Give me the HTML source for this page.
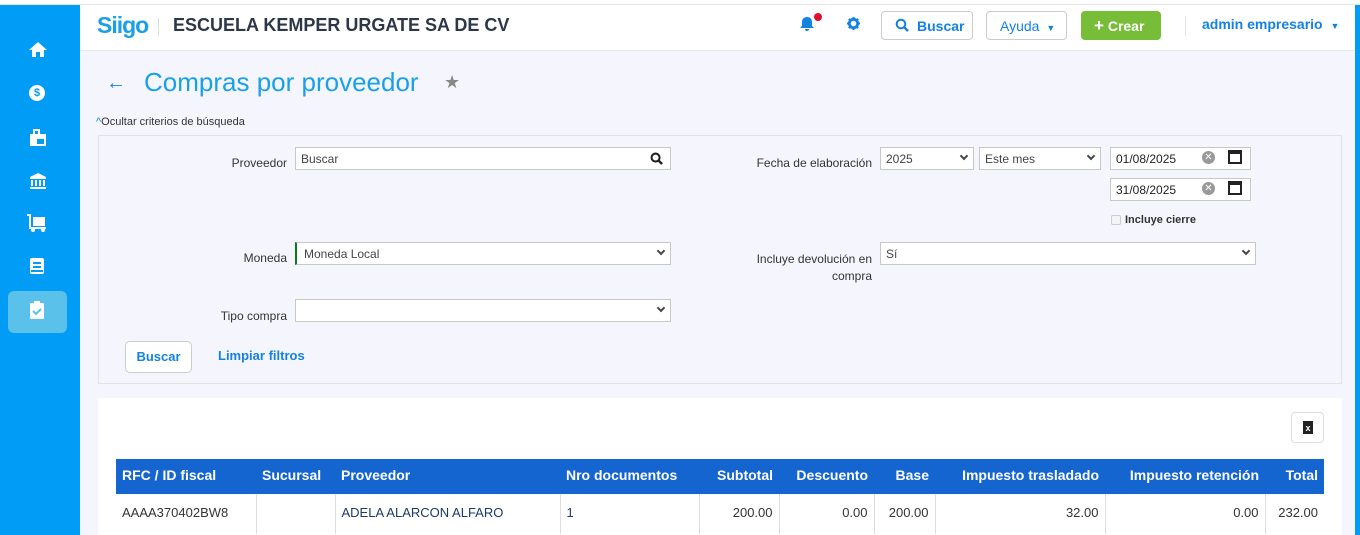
<!DOCTYPE html>
<html><head><meta charset="utf-8"><style>
*{box-sizing:border-box;margin:0;padding:0}
body{width:1360px;height:535px;overflow:hidden;background:#f5f6fd;font-family:"Liberation Sans",sans-serif;position:relative}
.a{position:absolute}
.side{left:0;top:5px;width:80px;height:530px;background:#009cf6}
.hdr{left:80px;top:5px;width:1275px;height:46px;background:#fff;border-bottom:1px solid #e6e8ee}
.lbl{font-size:12px;color:#333;text-align:right}
.inp{background:#fff;border:1px solid #c8c8c8;height:23px;font-size:12px;color:#444;padding:4px 0 0 5px}
.chev{position:absolute;right:6px;top:5px;width:6px;height:6px;border-right:2px solid #444;border-bottom:2px solid #444;transform:rotate(45deg)}
th{background:#1565d0;color:#fff;font-size:14px;font-weight:bold;height:35px;padding:0 6px 3px}
td{font-size:13px;color:#333;height:40px;padding:0 6px 4px;border-right:1px solid #ddd;vertical-align:middle}
table{border-collapse:collapse;position:absolute;left:116px;top:459px;width:1208px}
</style></head><body>
<div class="a" style="left:0;top:0;width:1360px;height:5px;background:#fff;border-bottom:1px solid #e4e4e4"></div>
<div class="a side"></div>
<div class="a" style="left:1355px;top:5px;width:5px;height:530px;background:#009cf6"></div>
<svg class="a" style="left:28px;top:40px" width="20" height="20" viewBox="0 0 20 20"><path d="M10 2L1 10h3v7h4v-5h4v5h4v-7h3z" fill="#fff"/></svg>
<div class="a" style="left:29px;top:85px;width:16px;height:16px;border-radius:50%;background:#fff;color:#009cf6;font-size:11px;font-weight:bold;text-align:center;line-height:16px">$</div>
<svg class="a" style="left:28px;top:128px" width="20" height="20" viewBox="0 0 20 20"><rect x="2" y="6" width="16" height="12" fill="#fff"/><rect x="6" y="2" width="5" height="5" fill="none" stroke="#fff" stroke-width="2"/><rect x="9" y="11" width="7" height="5" fill="#009cf6"/></svg>
<svg class="a" style="left:28px;top:171px" width="20" height="20" viewBox="0 0 20 20"><path d="M10 2L2 6v2h16V6z M3 9h2v6H3z M7 9h2v6H7z M11 9h2v6h-2z M15 9h2v6h-2z M2 16h16v2H2z" fill="#fff"/></svg>
<svg class="a" style="left:26px;top:213px" width="22" height="20" viewBox="0 0 22 20"><path d="M1 2h3v13h16" fill="none" stroke="#fff" stroke-width="2"/><rect x="7" y="4" width="12" height="9" fill="#fff"/><circle cx="7" cy="17" r="2" fill="#fff"/><circle cx="17" cy="17" r="2" fill="#fff"/></svg>
<svg class="a" style="left:29px;top:257px" width="16" height="18" viewBox="0 0 16 18"><rect x="1" y="1" width="14" height="16" rx="2" fill="#fff"/><rect x="4" y="5" width="8" height="2" fill="#009cf6"/><rect x="4" y="9" width="8" height="2" fill="#009cf6"/><rect x="2" y="13" width="12" height="2" fill="#009cf6"/></svg>
<div class="a" style="left:8px;top:291px;width:59px;height:42px;border-radius:6px;background:#5ac2ea"></div>
<svg class="a" style="left:30px;top:301px" width="14" height="18" viewBox="0 0 14 18"><rect x="0" y="2" width="14" height="16" rx="1" fill="#fff"/><rect x="4" y="0" width="6" height="4" fill="#fff"/><path d="M3 10l3 3 5-5" fill="none" stroke="#5ac2ea" stroke-width="2"/></svg>
<div class="a hdr"></div>
<div class="a" style="left:97px;top:12px;font-size:23px;font-weight:bold;color:#1ba0e8;letter-spacing:-1px">Siigo</div>
<div class="a" style="left:158px;top:18px;width:1px;height:18px;background:#ddd"></div>
<div class="a" style="left:173px;top:15px;font-size:18px;font-weight:bold;color:#2d3748">ESCUELA KEMPER URGATE SA DE CV</div>
<svg class="a" style="left:800px;top:16px" width="14" height="16" viewBox="0 0 14 16"><path d="M7 1c-3 0-5 2-5 5v4l-2 2h14l-2-2V6c0-3-2-5-5-5zM5 13a2 2 0 004 0z" fill="#1482e0"/></svg>
<div class="a" style="left:814px;top:13px;width:8px;height:8px;border-radius:50%;background:#e0102c"></div>
<svg class="a" style="left:847px;top:17px" width="13" height="13" viewBox="0 0 14 14"><circle cx="7" cy="7" r="4.5" fill="none" stroke="#1482e0" stroke-width="3"/><path d="M7 0v3M7 11v3M0 7h3M11 7h3M2 2l2 2M10 10l2 2M2 12l2-2M10 4l2-2" stroke="#1482e0" stroke-width="2.2"/></svg>
<div class="a" style="left:881px;top:11px;width:92px;height:29px;border:1px solid #ccc;border-radius:4px;background:#fff;font-size:14px;font-weight:bold;color:#1482e0;padding:6px 0 0 35px">Buscar</div>
<svg class="a" style="left:895px;top:18px" width="14" height="14" viewBox="0 0 14 14"><circle cx="6" cy="6" r="4.3" fill="none" stroke="#1482e0" stroke-width="2"/><path d="M9 9l4 4" stroke="#1482e0" stroke-width="2.4"/></svg>
<div class="a" style="left:986px;top:11px;width:81px;height:29px;border:1px solid #ccc;border-radius:4px;background:#fff;font-size:14px;color:#1482e0;padding:6px 0 0 13px">Ayuda <span style="font-size:9px;margin-left:3px">▼</span></div>
<div class="a" style="left:1081px;top:11px;width:80px;height:29px;border-radius:4px;background:#77bd37;font-size:14px;font-weight:bold;color:#fff;padding:5px 0 0 13px"><b style="font-size:17px">+</b> Crear</div>
<div class="a" style="left:1185px;top:16px;width:1px;height:20px;background:#e4e4e4"></div>
<div class="a" style="left:1202px;top:16px;font-size:14px;font-weight:bold;color:#1482e0">admin empresario <span style="font-size:9px;margin-left:4px">▼</span></div>
<div class="a" style="left:106px;top:72px;font-size:20px;font-weight:bold;color:#1482e0">←</div>
<div class="a" style="left:144px;top:67px;font-size:26px;color:#1ba0e8">Compras por proveedor</div>
<div class="a" style="left:444px;top:72px;font-size:18px;color:#888">★</div>
<div class="a" style="left:96px;top:116px;font-size:11px;color:#333"><span style="color:#1482e0">^</span>Ocultar criterios de búsqueda</div>
<div class="a" style="left:98px;top:135px;width:1244px;height:249px;border:1px solid #e2e2e2"></div>
<div class="a lbl" style="left:180px;top:156px;width:107px">Proveedor</div>
<div class="a inp" style="left:295px;top:147px;width:376px">Buscar</div>
<svg class="a" style="left:650px;top:152px" width="13" height="13" viewBox="0 0 14 14"><circle cx="6" cy="6" r="4.3" fill="none" stroke="#222" stroke-width="2.2"/><path d="M9 9l4 4" stroke="#222" stroke-width="2.6"/></svg>
<div class="a lbl" style="left:180px;top:251px;width:107px">Moneda</div>
<div class="a inp" style="left:295px;top:242px;width:376px;border-left:2px solid #0a7a1a;padding-left:7px">Moneda Local<i class="chev"></i></div>
<div class="a lbl" style="left:180px;top:309px;width:107px">Tipo compra</div>
<div class="a inp" style="left:295px;top:299px;width:376px"><i class="chev"></i></div>
<div class="a" style="left:125px;top:341px;width:67px;height:32px;border:1px solid #ccc;border-radius:5px;background:#fff;font-size:13px;font-weight:bold;color:#1482e0;text-align:center;line-height:30px">Buscar</div>
<div class="a" style="left:218px;top:348px;font-size:13px;font-weight:bold;color:#1482e0">Limpiar filtros</div>
<div class="a lbl" style="left:730px;top:156px;width:142px">Fecha de elaboración</div>
<div class="a inp" style="left:880px;top:147px;width:94px">2025<i class="chev"></i></div>
<div class="a inp" style="left:979px;top:147px;width:122px">Este mes<i class="chev"></i></div>
<div class="a inp" style="left:1110px;top:147px;width:141px;color:#222">01/08/2025<span class="a" style="left:91px;top:3px;width:13px;height:13px;border-radius:50%;background:#999;color:#fff;font-size:10px;text-align:center;line-height:13px">✕</span><span class="a" style="left:117px;top:2px;width:14px;height:14px;border:2px solid #222;border-top-width:4px"></span></div>
<div class="a inp" style="left:1110px;top:178px;width:141px;color:#222">31/08/2025<span class="a" style="left:91px;top:3px;width:13px;height:13px;border-radius:50%;background:#999;color:#fff;font-size:10px;text-align:center;line-height:13px">✕</span><span class="a" style="left:117px;top:2px;width:14px;height:14px;border:2px solid #222;border-top-width:4px"></span></div>
<div class="a" style="left:1111px;top:215px;width:10px;height:10px;border:1px solid #ccc;border-radius:2px;background:#f4f4f4"></div>
<div class="a" style="left:1125px;top:214px;font-size:11px;font-weight:bold;color:#333">Incluye cierre</div>
<div class="a lbl" style="left:730px;top:251px;width:142px;line-height:17px">Incluye devolución en compra</div>
<div class="a inp" style="left:880px;top:242px;width:376px">Sí<i class="chev"></i></div>
<div class="a" style="left:98px;top:398px;width:1244px;height:137px;background:#fff"></div>
<div class="a" style="left:1291px;top:412px;width:33px;height:31px;border:1px solid #ddd;border-radius:4px;background:#fff"><span class="a" style="left:11px;top:8px;width:10px;height:13px;background:#222;color:#fff;font-size:9px;font-weight:bold;text-align:center;line-height:14px">x</span></div>
<table>
<tr><th style="text-align:left;width:140px">RFC / ID fiscal</th><th style="text-align:left;width:79px">Sucursal</th><th style="text-align:left;width:225px">Proveedor</th><th style="text-align:left;width:139px">Nro documentos</th><th style="text-align:right;width:80px">Subtotal</th><th style="text-align:right;width:95px">Descuento</th><th style="text-align:right;width:61px">Base</th><th style="text-align:right;width:170px">Impuesto trasladado</th><th style="text-align:right;width:160px">Impuesto retención</th><th style="text-align:right">Total</th></tr>
<tr><td>AAAA370402BW8</td><td></td><td style="color:#1a3a6a">ADELA ALARCON ALFARO</td><td style="color:#1a3a6a">1</td><td style="text-align:right">200.00</td><td style="text-align:right">0.00</td><td style="text-align:right">200.00</td><td style="text-align:right">32.00</td><td style="text-align:right">0.00</td><td style="text-align:right;border-right:none">232.00</td></tr>
</table>
</body></html>
